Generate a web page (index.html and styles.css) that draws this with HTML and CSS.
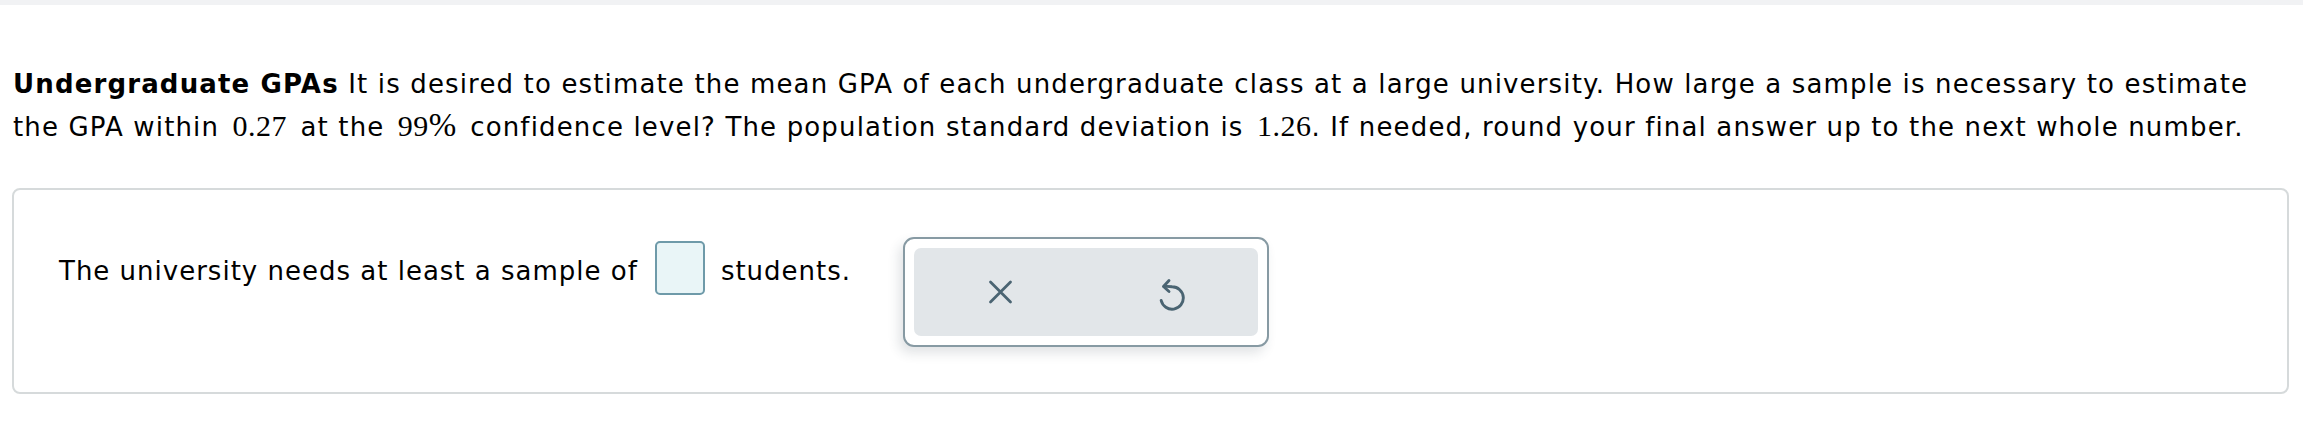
FILE: index.html
```html
<!DOCTYPE html>
<html lang="en">
<head>
<meta charset="utf-8">
<title>Undergraduate GPAs</title>
<link rel="stylesheet" href="styles.css">
</head>
<body>
<div class="topbar"></div>
<p class="prompt"><b>Undergraduate GPAs</b> It is desired to estimate the mean GPA of each undergraduate class at a large university. How large a sample is necessary to estimate the GPA within <span class="num">0.27</span> at the <span class="num">99<span class="pct">%</span></span> confidence level? The population standard deviation is <span class="num num-end">1.26</span>. If needed, round your final answer up to the next whole number.</p>
<div class="answer-box">
  <div class="sentence">
    <span class="txt">The university needs at least a sample of</span>
    <span class="input"></span>
    <span class="txt">students.</span>
  </div>
  <div class="panel">
    <div class="panel-inner">
      <button class="btn" type="button" aria-label="Clear">
        <svg class="ico-x" viewBox="0 0 24 24" width="25" height="24"><path d="M2 2 L22 22 M22 2 L2 22" fill="none" stroke="#4a6472" stroke-width="2.8" stroke-linecap="round"/></svg>
      </button>
      <button class="btn" type="button" aria-label="Undo">
        <svg class="ico-undo" viewBox="0 0 28 34" width="28" height="34"><path d="M11 3.5 L5.5 9.5 L11 14.5" fill="none" stroke="#4a6472" stroke-width="2.9" stroke-linecap="round" stroke-linejoin="round"/><path d="M6 9.5 C 8 9.3 11 9.3 14 9.8 A 11.2 11.2 0 1 1 3.2 23.5" fill="none" stroke="#4a6472" stroke-width="2.9" stroke-linecap="round"/></svg>
      </button>
    </div>
  </div>
</div>
</body>
</html>
```
FILE: styles.css
```css
html, body {
  margin: 0;
  padding: 0;
  background: #ffffff;
}
body {
  font-family: "DejaVu Sans", Verdana, sans-serif;
  font-size: 26px;
  letter-spacing: 1px;
  color: #000000;
}
.topbar {
  height: 5px;
  background: #f1f2f4;
}
.prompt {
  margin: 58px 0 0 0;
  padding: 0 24px 0 13px;
  line-height: 42px;
  letter-spacing: 1.15px;
}
.prompt b {
  font-weight: bold;
}
.num {
  font-family: "Liberation Serif", "Times New Roman", serif;
  font-size: 30px;
  letter-spacing: 0.5px;
  margin: 0 4px;
}
.num-end {
  margin-right: 0;
}
.pct {
  font-size: 33px;
  line-height: 1;
}
.answer-box {
  margin: 40px 14px 0 12px;
  height: 202px;
  border: 2px solid #d6dadb;
  border-radius: 8px;
  box-sizing: content-box;
  padding: 0 0 0 45px;
  display: flex;
  align-items: flex-start;
}
.sentence {
  margin-top: 51px;
  height: 54px;
  display: flex;
  align-items: center;
}
.txt {
  margin-top: 6px;
  line-height: 30px;
}
.input {
  width: 46px;
  height: 50px;
  margin: 0 16px 0 17px;
  border: 2px solid #6e9aa9;
  border-radius: 5px;
  background: #e9f5f7;
}
.panel {
  margin: 47px 0 0 52px;
  width: 344px;
  height: 88px;
  padding: 9px;
  border: 2px solid #879aa3;
  border-radius: 11px;
  background: #ffffff;
  box-shadow: -4px 6px 12px rgba(40, 60, 70, 0.14);
}
.panel-inner {
  height: 88px;
  background: #e2e6e9;
  border-radius: 7px;
  display: flex;
}
.btn {
  flex: 1;
  border: 0;
  padding: 0;
  margin: 0;
  background: transparent;
  display: flex;
  align-items: center;
  justify-content: center;
}
.ico-undo {
  margin-top: 4px;
}
```
